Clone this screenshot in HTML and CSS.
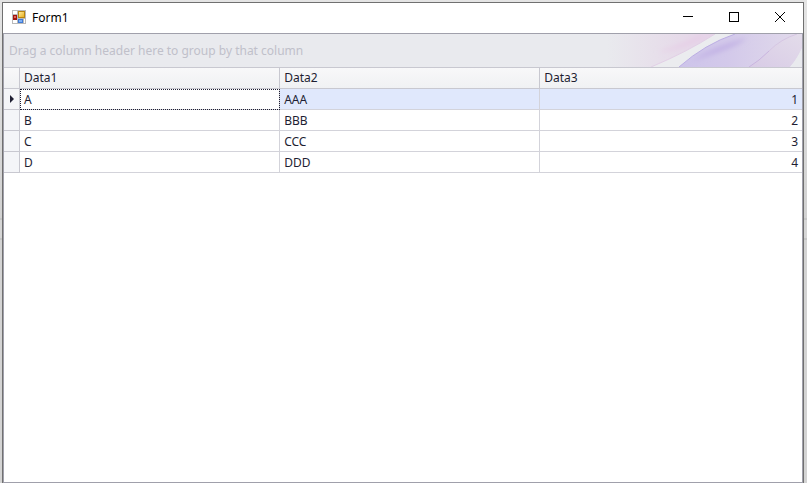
FILE: index.html
```html
<!DOCTYPE html>
<html lang="en">
<head>
    <meta charset="UTF-8">
    <meta name="viewport" content="width=device-width, initial-scale=1.0">
    <title>Form1</title>
    <link rel="stylesheet" href="styles.css">
</head>
<body>
    <div class="window">
        <header class="titlebar">
            <svg class="app-icon" width="14" height="14" viewBox="0 0 14 14" shape-rendering="crispEdges">
                <defs>
                    <linearGradient id="gold" x1="0" y1="0" x2="1" y2="1">
                        <stop offset="0" stop-color="#ffeb9a"/>
                        <stop offset="1" stop-color="#e8b020"/>
                    </linearGradient>
                </defs>
                <rect width="14" height="14" fill="#b9b9b9"/>
                <rect x="1" y="1" width="4" height="3" fill="#fff"/>
                <rect x="1" y="10" width="4" height="3" fill="#fff"/>
                <rect x="12" y="9" width="1" height="4" fill="#fff"/>
                <rect x="1" y="5" width="4" height="5" fill="#a3130c"/>
                <rect x="2" y="6" width="2" height="2" fill="#d9675c"/>
                <rect x="6" y="1" width="7" height="7" fill="#b88410"/>
                <rect x="7" y="2" width="5" height="5" fill="url(#gold)"/>
                <rect x="6" y="9" width="5" height="4" fill="#3f7ad6"/>
                <rect x="7" y="10" width="3" height="2" fill="#7db0f5"/>
            </svg>
            <h1 class="title">Form1</h1>
            <div class="controls">
                <button type="button" aria-label="Minimize">
                    <svg width="10" height="10" viewBox="0 0 10 10" shape-rendering="crispEdges"><path d="M0 4.5H10"/></svg>
                </button>
                <button type="button" aria-label="Maximize">
                    <svg width="10" height="10" viewBox="0 0 10 10" shape-rendering="crispEdges"><path d="M.5 .5H9.5V9.5H.5Z"/></svg>
                </button>
                <button type="button" aria-label="Close">
                    <svg width="10" height="10" viewBox="0 0 10 10"><path d="M0 0L10 10M10 0L0 10"/></svg>
                </button>
            </div>
        </header>

        <main class="grid">
            <div class="group-panel">
                <span>Drag a column header here to group by that column</span>
                <svg class="swirl" width="195" height="33" viewBox="0 0 195 33">
                    <defs>
                        <linearGradient id="pink" x1="0" y1="0" x2="1" y2="0">
                            <stop offset="0" stop-color="#e9eaee"/>
                            <stop offset=".7" stop-color="#e6dae9"/>
                            <stop offset="1" stop-color="#e6d2e8"/>
                        </linearGradient>
                        <linearGradient id="violet" x1="0" y1="0" x2="1" y2="0">
                            <stop offset="0" stop-color="#cdc4ea"/>
                            <stop offset=".4" stop-color="#d3c9ea"/>
                            <stop offset="1" stop-color="#e2dbeb"/>
                        </linearGradient>
                        <linearGradient id="leaf" x1="0" y1="1" x2="1" y2="0">
                            <stop offset="0" stop-color="#d8cbe6"/>
                            <stop offset="1" stop-color="#e3dcea"/>
                        </linearGradient>
                        <filter id="soft" x="-20%" y="-50%" width="140%" height="200%">
                            <feGaussianBlur stdDeviation="2.5"/>
                        </filter>
                    </defs>
                    <path d="M0 33V0H108Q80 18 44 33Z" fill="url(#pink)"/>
                    <path d="M50 18Q72 12 92 2L98 3Q74 17 50 18Z" fill="#e6cde6" filter="url(#soft)"/>
                    <path d="M44 33Q80 18 108 0H128Q95 13 72 33Z" fill="#ebecef"/>
                    <path d="M44 33Q80 18 108 0" fill="none" stroke="#e2cfe6"/>
                    <path d="M72 33Q98 10 128 0H195V14L183 33Z" fill="url(#violet)"/>
                    <path d="M84 27Q108 12 140 4Q130 13 84 27Z" fill="#c0afe4" filter="url(#soft)"/>
                    <path d="M72 33Q98 10 128 0" fill="none" stroke="#bcaee4"/>
                    <path d="M142 33Q152 27 162 17Q174 5 190 0H195V14Q190 25 183 33Z" fill="url(#leaf)"/>
                    <path d="M142 33Q152 27 162 17" fill="none" stroke="#c9b4df"/>
                    <path d="M162 17Q174 5 190 0" fill="none" stroke="#d6c6e3"/>
                    <path d="M195 14Q190 26 183 33H195Z" fill="#e9eaee"/>
                </svg>
            </div>

            <table class="data">
                <colgroup>
                    <col class="indicator-col">
                    <col class="text-col">
                    <col class="text-col">
                    <col>
                </colgroup>
                <thead>
                    <tr>
                        <th></th>
                        <th scope="col">Data1</th>
                        <th scope="col">Data2</th>
                        <th scope="col">Data3</th>
                    </tr>
                </thead>
                <tbody>
                    <tr class="selected">
                        <td class="indicator">
                            <svg width="4" height="8" viewBox="0 0 4 8"><path d="M0 0L4 4L0 8Z" fill="#1e1e32"/></svg>
                        </td>
                        <td class="focused">A</td>
                        <td>AAA</td>
                        <td class="number">1</td>
                    </tr>
                    <tr>
                        <td class="indicator"></td>
                        <td>B</td>
                        <td>BBB</td>
                        <td class="number">2</td>
                    </tr>
                    <tr>
                        <td class="indicator"></td>
                        <td>C</td>
                        <td>CCC</td>
                        <td class="number">3</td>
                    </tr>
                    <tr>
                        <td class="indicator"></td>
                        <td>D</td>
                        <td>DDD</td>
                        <td class="number">4</td>
                    </tr>
                </tbody>
            </table>
        </main>
    </div>
</body>
</html>
```
FILE: styles.css
```css
* {
    box-sizing: border-box;
}

body {
    margin: 0;
    padding: 2px 3px 0 2px;
    height: 100vh;
    background: linear-gradient(#e4e4e4, #d2d2d2 218px, #c6c6c6 218px, #c6c6c6 220px, #d6d6d6 220px, #d6d6d6 238px, #c6c6c6 238px, #c6c6c6 240px, #d4d4d4 240px);
    font-family: "Noto Sans", sans-serif;
    font-size: 12px;
    color: #1e1e32;
}

.window {
    display: flex;
    flex-direction: column;
    height: 100%;
    background-color: #fff;
    border: 1px solid #707070;
    border-bottom: none;
}

.titlebar {
    display: flex;
    align-items: center;
    height: 30px;
    padding-left: 9px;
    padding-bottom: 2px;
    color: #000;
}

.title {
    flex: 1;
    margin: 0 0 0 6px;
    font-size: 12px;
    font-weight: normal;
}

.controls {
    display: flex;
    height: 100%;
}

.controls button {
    display: flex;
    align-items: center;
    justify-content: center;
    width: 46px;
    padding: 0;
    border: none;
    background: none;
}

.controls path {
    fill: none;
    stroke: #000;
}

.grid {
    flex: 1;
    border: 1px solid #a0a0ab;
}

.group-panel {
    display: flex;
    align-items: center;
    justify-content: space-between;
    height: 34px;
    padding-left: 5px;
    background-color: #e9eaee;
    border-bottom: 1px solid #c8c8d0;
    color: #c0c0ca;
}

.data {
    width: 100%;
    table-layout: fixed;
    border-collapse: separate;
    border-spacing: 0;
}

.indicator-col {
    width: 16px;
}

.text-col {
    width: 32.6%;
}

th,
td {
    height: 21px;
    padding: 0 4px;
    line-height: 20px;
    text-align: left;
    font-weight: normal;
    border-right: 1px solid #d3d3da;
    border-bottom: 1px solid #d3d3da;
}

th:last-child,
td:last-child {
    border-right: none;
}

th {
    background: linear-gradient(#f8f8f9, #f0f1f3);
    border-color: #c8c8d0;
}

td {
    padding-top: 2px;
    line-height: 18px;
}

.indicator {
    padding: 0 0 0 6px;
    background-color: #f4f5f8;
    border-color: #c8c8d0;
}

.indicator svg {
    display: block;
}

.selected {
    background-color: #e0e8fc;
}

.selected .focused {
    background-color: #fff;
    outline: 1px dotted #1e1e32;
    outline-offset: -1px;
}

.number {
    text-align: right;
}
```
